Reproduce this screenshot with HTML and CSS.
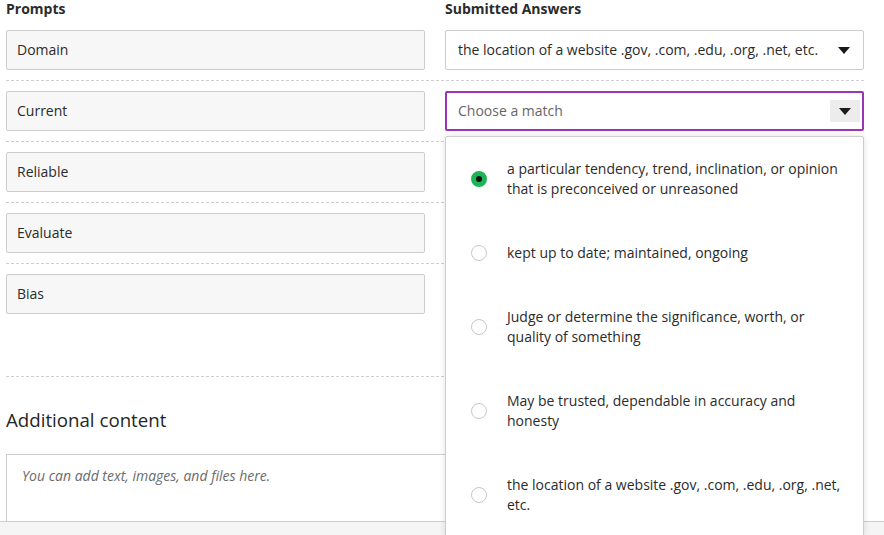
FILE: index.html
```html
<!DOCTYPE html>
<html lang="en">
<head>
    <meta charset="UTF-8">
    <meta name="viewport" content="width=device-width, initial-scale=1.0">
    <title>Matching Question</title>
    <link rel="stylesheet" href="styles.css">
</head>
<body>
    <div class="page">
        <div class="match-table">
            <div class="match-head">
                <div>Prompts</div>
                <div>Submitted Answers</div>
            </div>

            <div class="match-row">
                <div class="prompt">Domain</div>
                <div class="answer">
                    <div class="select">
                        <span>the location of a website .gov, .com, .edu, .org, .net, etc.</span>
                        <span class="caret"></span>
                    </div>
                </div>
            </div>

            <div class="match-row">
                <div class="prompt">Current</div>
                <div class="answer">
                    <div class="select open">
                        <span class="placeholder">Choose a match</span>
                        <span class="caret-btn"><span class="caret"></span></span>
                    </div>
                    <ul class="menu">
                        <li class="option selected"><span class="radio"></span><span>a particular tendency, trend, inclination, or opinion that is preconceived or unreasoned</span></li>
                        <li class="option"><span class="radio"></span><span>kept up to date; maintained, ongoing</span></li>
                        <li class="option"><span class="radio"></span><span>Judge or determine the significance, worth, or quality of something</span></li>
                        <li class="option"><span class="radio"></span><span>May be trusted, dependable in accuracy and honesty</span></li>
                        <li class="option"><span class="radio"></span><span>the location of a website .gov, .com, .edu, .org, .net, etc.</span></li>
                    </ul>
                </div>
            </div>

            <div class="match-row">
                <div class="prompt">Reliable</div>
                <div class="answer"></div>
            </div>

            <div class="match-row">
                <div class="prompt">Evaluate</div>
                <div class="answer"></div>
            </div>

            <div class="match-row last">
                <div class="prompt">Bias</div>
                <div class="answer"></div>
            </div>
        </div>

        <h3 class="section-title">Additional content</h3>
        <div class="editor">You can add text, images, and files here.</div>
    </div>
    <div class="footer-bar"></div>
</body>
</html>
```

FILE: styles.css
```css
html, body {
    height: 100%;
}
body {
    margin: 0;
    font-family: "Open Sans", Arial, sans-serif;
    font-size: 14px;
    color: #2b2b2b;
    background-color: white;
    display: flex;
    flex-direction: column;
    overflow: hidden;
}
.page {
    flex: 1;
    min-height: 0;
    padding: 0 20px 0 6px;
}
.match-head,
.match-row {
    display: grid;
    grid-template-columns: 1fr 1fr;
    column-gap: 20px;
}
.match-head {
    height: 30px;
    font-weight: bold;
    line-height: 18px;
}
.match-row {
    padding: 10px 0;
    border-bottom: 1px dashed #cfcfcf;
}
.match-head + .match-row {
    padding-top: 0;
}
.match-row.last {
    padding-bottom: 62px;
}
.prompt {
    height: 40px;
    box-sizing: border-box;
    display: flex;
    align-items: center;
    padding: 0 10px 2px;
    background-color: #f7f7f7;
    border: 1px solid #cdcdcd;
    border-radius: 2px;
}
.answer {
    position: relative;
}
.select {
    height: 40px;
    box-sizing: border-box;
    display: flex;
    align-items: center;
    justify-content: space-between;
    padding: 0 12px;
    border: 1px solid #cdcdcd;
    border-radius: 2px;
    background-color: white;
}
.select > span:first-child {
    padding-bottom: 2px;
}
.select.open {
    border: 2px solid #9b35b4;
    padding: 0 2px 0 11px;
}
.placeholder {
    color: #666;
}
.caret {
    width: 0;
    height: 0;
    border-left: 6px solid transparent;
    border-right: 6px solid transparent;
    border-top: 7px solid #1a1a1a;
    margin-right: 1px;
}
.caret-btn {
    width: 30px;
    height: 22px;
    display: flex;
    align-items: center;
    justify-content: center;
    background-color: #ececec;
}
.caret-btn .caret {
    margin: 0;
}
.menu {
    position: absolute;
    top: 45px;
    left: 0;
    right: 0;
    margin: 0;
    padding: 0;
    list-style: none;
    background-color: white;
    border: 1px solid #cdcdcd;
    border-radius: 2px;
    box-shadow: 0 0 6px rgba(0, 0, 0, 0.12);
    z-index: 5;
}
.option {
    display: flex;
    align-items: center;
    gap: 20px;
    padding: 22px 20px 22px 25px;
    line-height: 20px;
}
.radio {
    flex: none;
    width: 16px;
    height: 16px;
    box-sizing: border-box;
    border: 1px solid #c8c8c8;
    border-radius: 50%;
    background-color: white;
}
.option.selected .radio {
    border: 5px solid #1cb456;
    background-color: #111;
}
.section-title {
    margin: 31px 0 22px;
    font-size: 18.7px;
    font-weight: normal;
    line-height: 24px;
    color: #262626;
}
.editor {
    height: 80px;
    box-sizing: border-box;
    padding: 11px 15px;
    border: 1px solid #cdcdcd;
    font-size: 14px;
    font-style: italic;
    color: #6b6b6b;
}
.footer-bar {
    flex: none;
    height: 13px;
    background-color: #f5f5f5;
    border-top: 1px solid #cdcdcd;
}
```
